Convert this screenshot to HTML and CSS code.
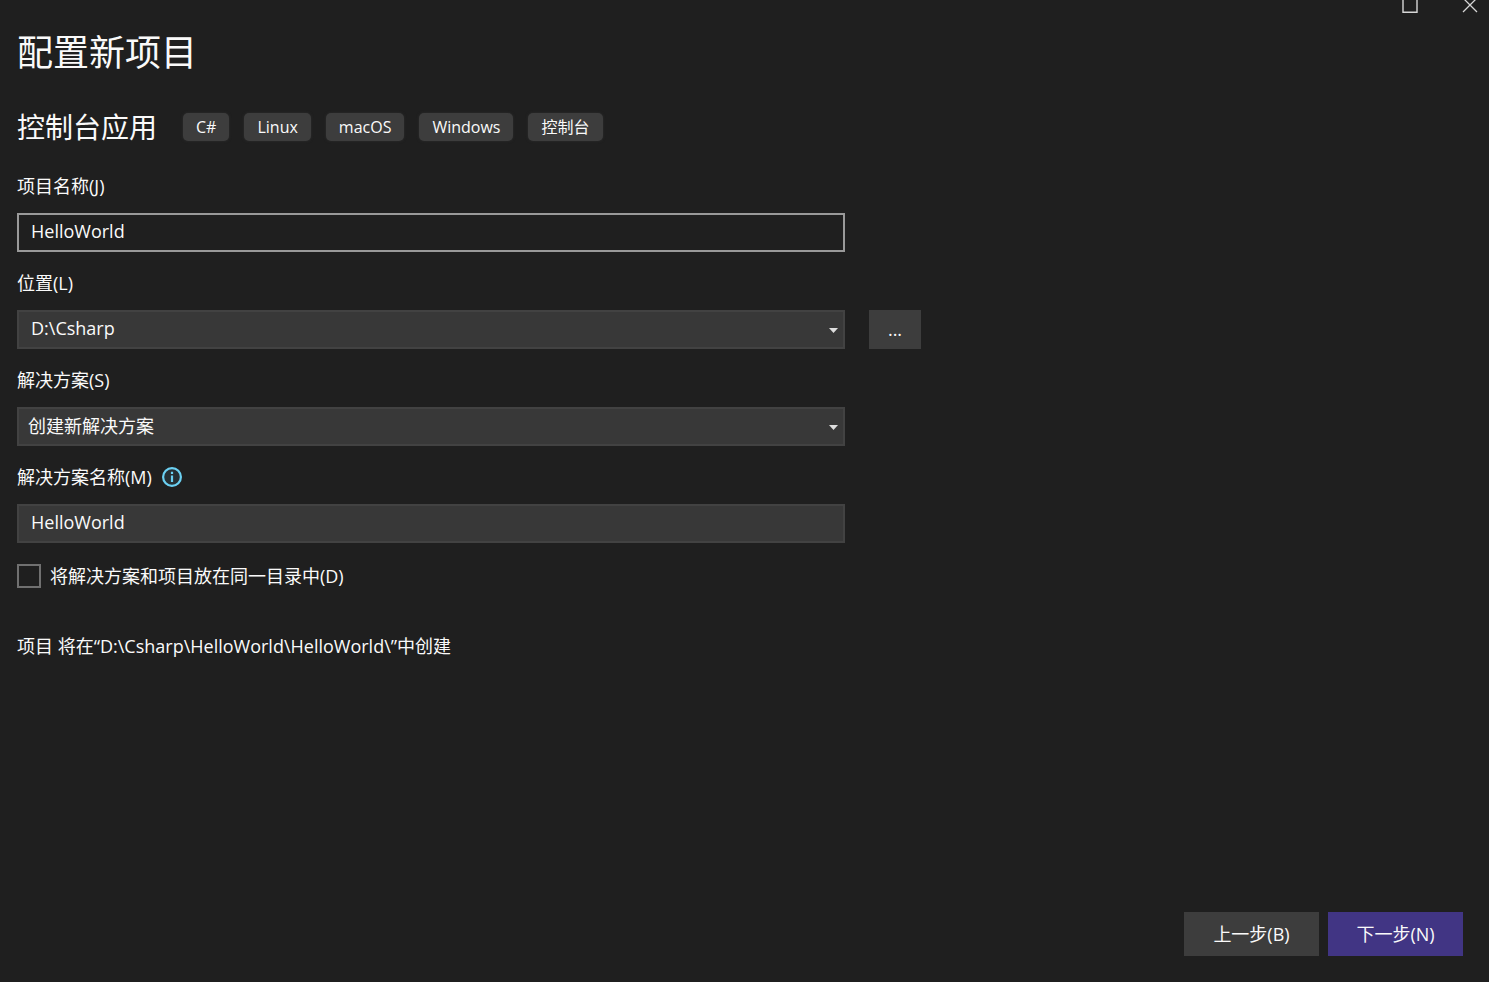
FILE: index.html
```html
<!DOCTYPE html>
<html lang="zh-CN">
<head>
  <meta charset="UTF-8">
  <meta name="viewport" content="width=device-width, initial-scale=1.0">
  <title>配置新项目</title>
  <link rel="stylesheet" href="styles.css">
</head>
<body>
  <header class="titlebar">
    <button type="button" class="window-button" aria-label="最大化">
      <svg width="16" height="14" viewBox="0 0 16 14" fill="none" stroke="#d6d6d6" stroke-width="1.4">
        <path d="M1 -2V12.3H15V-2"/>
      </svg>
    </button>
    <button type="button" class="window-button" aria-label="关闭">
      <svg width="16" height="14" viewBox="0 0 16 14" fill="none" stroke="#d6d6d6" stroke-width="1.3">
        <path d="M1 -2L15 12M15 -2L1 12"/>
      </svg>
    </button>
  </header>

  <form class="project-form">
    <main class="content">
      <h1>配置新项目</h1>

      <div class="template">
        <h2>控制台应用</h2>
        <ul class="tags">
          <li>C#</li>
          <li>Linux</li>
          <li>macOS</li>
          <li>Windows</li>
          <li>控制台</li>
        </ul>
      </div>

      <div class="input-group">
        <label for="project-name">项目名称(J)</label>
        <input type="text" id="project-name" class="field active" value="HelloWorld">
      </div>

      <div class="input-group">
        <label for="location">位置(L)</label>
        <div class="location-row">
          <div class="select-box">
            <select id="location" class="field">
              <option>D:\Csharp</option>
            </select>
            <svg class="arrow" width="9" height="5" viewBox="0 0 9 5"><path d="M0 0H9L4.5 5Z" fill="#dedede"/></svg>
          </div>
          <button type="button" class="browse" aria-label="浏览">...</button>
        </div>
      </div>

      <div class="input-group">
        <label for="solution">解决方案(S)</label>
        <div class="select-box">
          <select id="solution" class="field compact">
            <option>创建新解决方案</option>
          </select>
          <svg class="arrow" width="9" height="5" viewBox="0 0 9 5"><path d="M0 0H9L4.5 5Z" fill="#dedede"/></svg>
        </div>
      </div>

      <div class="input-group">
        <div class="label-row">
          <label for="solution-name">解决方案名称(M)</label>
          <svg width="20" height="20" viewBox="0 0 20 20">
            <circle cx="10" cy="10" r="8.9" fill="#262f33" stroke="#6bd0f2" stroke-width="2.2"/>
            <path d="M8.9 8.6H11.1V15H8.9ZM8.9 4.8H11.1V7H8.9Z" fill="#6bd0f2"/>
          </svg>
        </div>
        <input type="text" id="solution-name" class="field" value="HelloWorld">
      </div>

      <div class="checkbox-group">
        <input type="checkbox" id="same-dir">
        <label for="same-dir">将解决方案和项目放在同一目录中(D)</label>
      </div>

      <p class="summary">项目 将在“D:\Csharp\HelloWorld\HelloWorld\”中创建</p>
    </main>

    <footer class="actions">
      <button type="button">上一步(B)</button>
      <button type="submit" class="primary">下一步(N)</button>
    </footer>
  </form>
</body>
</html>
```
FILE: styles.css
```css
* {
  box-sizing: border-box;
}

body {
  display: flex;
  flex-direction: column;
  min-height: 100vh;
  margin: 0;
  background-color: #1f1f1f;
  color: #fafafa;
  font-family: "Open Sans", "Noto Sans CJK SC", sans-serif;
  font-size: 18px;
  line-height: 24px;
}

input, select, button {
  font: inherit;
  color: inherit;
}

button {
  border: none;
  border-radius: 0;
  background-color: #3d3d3d;
  cursor: pointer;
}

.titlebar {
  display: flex;
  justify-content: flex-end;
  gap: 22px;
  height: 14px;
}

.window-button {
  display: flex;
  justify-content: center;
  width: 38px;
  padding: 0;
  background: none;
}

.project-form {
  display: flex;
  flex-direction: column;
  flex: 1;
}

.content {
  flex: 1;
  padding: 15px 17px;
}

h1 {
  margin: 0;
  font-size: 36px;
  font-weight: 400;
  line-height: 48px;
}

.template {
  display: flex;
  align-items: center;
  gap: 26px;
  margin: 30px 0 27px;
}

h2 {
  margin: 0;
  font-size: 28px;
  font-weight: 400;
  line-height: 40px;
}

.tags {
  display: flex;
  gap: 15px;
  margin: 0;
  padding: 0;
  list-style: none;
}

.tags li {
  padding: 2px 13px;
  border-radius: 5px;
  background-color: #3d3d3d;
  box-shadow: 0 0 2px 1px #262626;
  font-size: 16px;
  line-height: 24px;
}

.input-group {
  margin-bottom: 19px;
}

.input-group label {
  display: block;
}

.input-group > label,
.label-row {
  margin-bottom: 15px;
}

.label-row {
  display: flex;
  align-items: center;
  gap: 10px;
}

.field {
  display: block;
  width: 100%;
  max-width: 828px;
  height: 39px;
  padding: 0 12px 4px;
  border: 2px solid #424242;
  border-radius: 0;
  outline: none;
  background-color: #383838;
  appearance: none;
}

.field.active {
  border-color: #999999;
  background-color: #1f1f1f;
}

.field.compact {
  padding: 0 9px 1px;
}

.select-box {
  position: relative;
  flex: 1;
  max-width: 828px;
}

.arrow {
  position: absolute;
  top: 18px;
  right: 7px;
  pointer-events: none;
}

.location-row {
  display: flex;
  gap: 24px;
}

.browse {
  width: 52px;
  height: 39px;
  padding: 0 0 2px;
}

.checkbox-group {
  display: flex;
  align-items: center;
  gap: 9px;
  margin-top: 21px;
}

.checkbox-group input {
  width: 24px;
  height: 24px;
  margin: 0;
  border: 2px solid #707070;
  appearance: none;
}

.checkbox-group input:checked {
  background-color: #413584;
}

.summary {
  margin: 46px 0 0;
}

.actions {
  display: flex;
  justify-content: flex-end;
  gap: 9px;
  padding: 26px;
}

.actions button {
  width: 135px;
  height: 44px;
  padding: 0;
}

.actions .primary {
  background-color: #413584;
}
```
